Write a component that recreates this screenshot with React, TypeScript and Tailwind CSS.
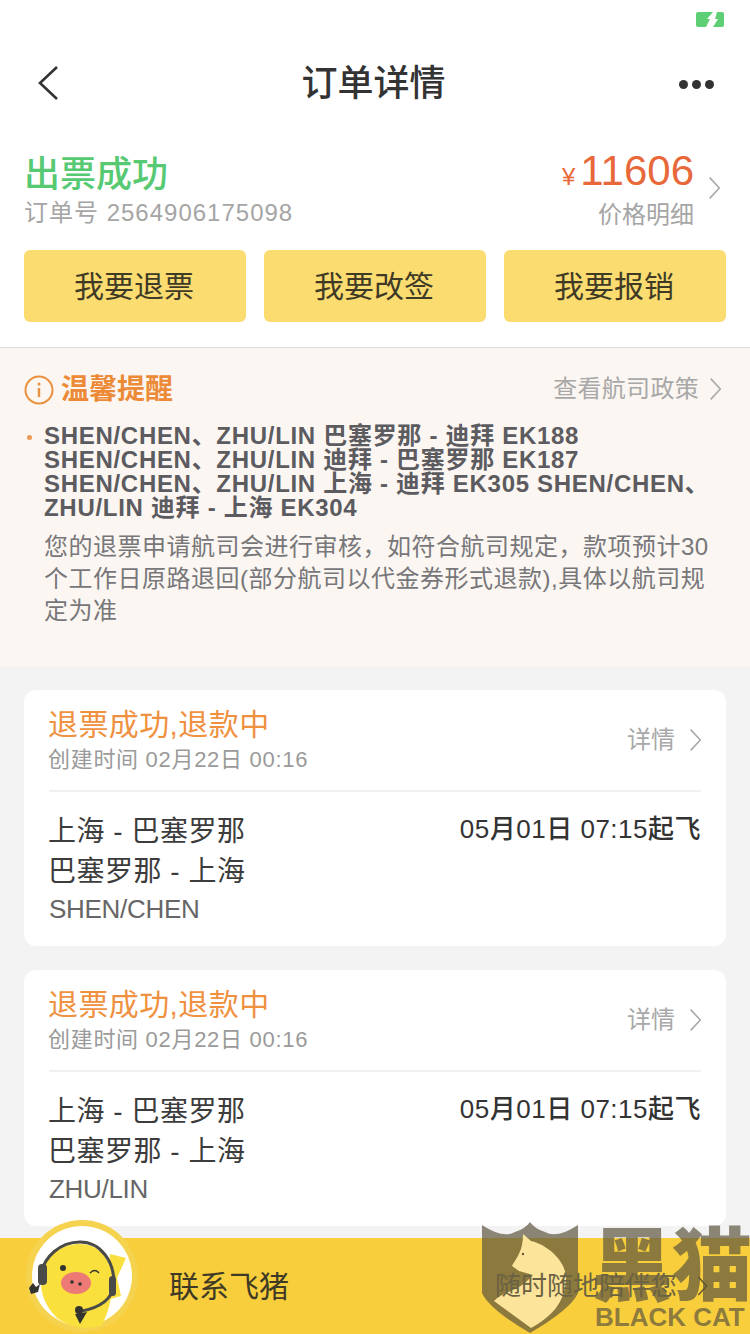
const Chevron = ({ className }: { className: string }) => (
  <svg viewBox="0 0 16 30" className={className} fill="none" stroke="currentColor" strokeWidth="2">
    <path d="M2 2 L14 15 L2 28" />
  </svg>
);

const Buttons = ['我要退票', '我要改签', '我要报销'];

const RefundCard = ({ name }: { name: string }) => (
  <div className="bg-white rounded-xl h-[256px] px-[25px]">
    <div className="h-[102px] flex justify-between items-start border-b-2 border-[#f0f0f0]">
      <div>
        <div className="text-[30px] leading-[38px] mt-[16px] ml-[-1px] tracking-[0.4px] text-[#f0913f]">退票成功,退款中</div>
        <div className="text-[22px] leading-[30px] mt-[1px] ml-[-1px] tracking-[0.7px] text-[#9a9a9a]">创建时间 02月22日 00:16</div>
      </div>
      <div className="flex items-center gap-[14px] mt-[35px] text-[24px] leading-[30px] text-[#a8a8a8]">
        详情
        <Chevron className="w-[13px] h-[24px] mr-[-1px] text-[#aaaaaa]" />
      </div>
    </div>
    <div className="flex justify-between items-start pt-[20px]">
      <div className="text-[28px] leading-[40px] ml-[-1px] tracking-[0.5px] text-[#3c3c3c]">
        <div>上海 - 巴塞罗那</div>
        <div>巴塞罗那 - 上海</div>
        <div className="text-[#666666] text-[26px] tracking-[-0.3px] ml-[1px] mt-[-3px]">{name}</div>
      </div>
      <div className="text-[26px] leading-[38px] mt-[-2px] tracking-[0.5px] font-medium text-[#333333]">05月01日 07:15起飞</div>
    </div>
  </div>
);

export default function App() {
  return (
    <div className="relative w-[750px] h-[1334px] overflow-hidden bg-white font-['Liberation_Sans','Noto_Sans_CJK_SC',sans-serif]">
      {/* Status bar */}
      <div className="h-[40px] flex justify-end pr-[26px] pt-[12px]">
        <svg viewBox="0 0 28 15" className="w-[28px] h-[15px]">
          <path d="M2 0 H17 L11 7 H14 L10 15 H2 Q0 15 0 13 V2 Q0 0 2 0 Z" fill="#5fcf76" />
          <path d="M21 0 H26 Q28 0 28 2 V13 Q28 15 26 15 H17 L22 7 H19 Z" fill="#5fcf76" />
        </svg>
      </div>

      {/* Nav */}
      <div className="h-[86px] grid grid-cols-[1fr_auto_1fr] items-center pl-[38px] pr-[36px]">
        <svg viewBox="0 0 20 34" className="w-[20px] h-[34px] text-[#333333]" fill="none" stroke="currentColor" strokeWidth="2.6">
          <path d="M19 1 L2 17 L19 33" />
        </svg>
        <div className="text-[36px] ml-[-3px] mr-[2px] mt-[2px] font-medium text-[#333333]">订单详情</div>
        <div className="flex justify-end gap-[4px] mt-[2px]">
          <span className="w-[9px] h-[9px] rounded-full bg-[#333333]" />
          <span className="w-[9px] h-[9px] rounded-full bg-[#333333]" />
          <span className="w-[9px] h-[9px] rounded-full bg-[#333333]" />
        </div>
      </div>

      {/* Order summary */}
      <div className="h-[124px] flex justify-between items-start pl-[24px] pr-[29px]">
        <div>
          <div className="text-[36px] leading-[46px] mt-[26px] font-medium text-[#57c973]">出票成功</div>
          <div className="text-[24px] leading-[32px] mt-[-1px] tracking-[1px] text-[#a5a5a5]">订单号 2564906175098</div>
        </div>
        <div className="flex items-start">
          <div className="flex flex-col items-end mt-[20px]">
            <div className="flex items-baseline leading-[50px] text-[#e8683a]">
              <span className="text-[24px] mr-[5px]">¥</span>
              <span className="text-[42px]">11606</span>
            </div>
            <div className="text-[24px] leading-[30px] mt-[-2px] text-[#a5a5a5]">价格明细</div>
          </div>
          <Chevron className="w-[13px] h-[24px] ml-[14px] mt-[50px] text-[#a8a8a8]" />
        </div>
      </div>

      {/* Actions */}
      <div className="flex gap-[18px] px-[24px]">
        {Buttons.map((b) => (
          <div key={b} className="flex-1 h-[72px] rounded-md bg-[#fbdc70] flex items-center justify-center pr-[2px] text-[30px] text-[#3f3a26]">
            {b}
          </div>
        ))}
      </div>

      {/* Notice */}
      <div className="mt-[25px] h-[320px] border-t border-[#dcdcdc] bg-[#fbf6f1] px-[24px]">
        <div className="flex justify-between items-center pt-[21px] h-[62px]">
          <div className="flex items-center gap-[7px]">
            <svg viewBox="0 0 30 30" className="w-[30px] h-[30px]" fill="none">
              <circle cx="15" cy="15" r="13.5" stroke="#e8913f" strokeWidth="2" />
              <circle cx="15" cy="9" r="1.5" fill="#e8913f" />
              <path d="M15 13 V22" stroke="#e8913f" strokeWidth="2.4" />
            </svg>
            <span className="text-[28px] leading-[36px] font-bold text-[#ec8a37]">温馨提醒</span>
          </div>
          <div className="flex items-center gap-[10px] text-[24px] mt-[-2px] tracking-[0.3px] text-[#a8a8a8]">
            查看航司政策
            <Chevron className="w-[13px] h-[24px] mr-[4px] text-[#aaaaaa]" />
          </div>
        </div>
        <div className="relative pl-[20px] mt-[14px]">
          <span className="absolute left-[3px] top-[11px] w-[5px] h-[5px] rounded-full bg-[#ec9a55]" />
          <div className="text-[24px] leading-[24px] tracking-[0.7px] font-bold text-[#5b5b60]">
            <div>SHEN/CHEN、ZHU/LIN 巴塞罗那 - 迪拜 EK188</div>
            <div>SHEN/CHEN、ZHU/LIN 迪拜 - 巴塞罗那 EK187</div>
            <div>SHEN/CHEN、ZHU/LIN 上海 - 迪拜 EK305 SHEN/CHEN、</div>
            <div>ZHU/LIN 迪拜 - 上海 EK304</div>
          </div>
          <div className="mt-[11px] text-[24px] leading-[32px] tracking-[0.5px] text-[#77777a]">
            您的退票申请航司会进行审核，如符合航司规定，款项预计30个工作日原路退回(部分航司以代金券形式退款),具体以航司规定为准
          </div>
        </div>
      </div>

      {/* Refund list */}
      <div className="bg-[#f3f3f3] h-[668px] px-[24px] pt-[23px] flex flex-col gap-[24px]">
        <RefundCard name="SHEN/CHEN" />
        <RefundCard name="ZHU/LIN" />
      </div>

      {/* Bottom bar */}
      <div className="absolute left-0 right-0 bottom-0 h-[96px] bg-[#f8ce3c]" />

      {/* Mascot */}
      <svg viewBox="0 0 114 114" className="absolute left-[25px] top-[1220px] w-[114px] h-[114px]">
        <circle cx="57" cy="56" r="56" fill="#f5d34e" />
        <circle cx="57" cy="56" r="50" fill="#ffffff" />
        <path d="M85 34 L101 38 L92 58 L96 76 L82 80 Z" fill="#f9e03d" />
        <path d="M16 62 C16 38 34 24 55 24 C76 24 87 42 87 62 C87 78 84 92 76 106 Q50 112 32 98 C20 86 16 74 16 62 Z" fill="#f9e03d" />
        <path d="M15 58 C18 36 36 22 55 22 C76 22 90 42 89 66 C86 82 72 88 57 91" fill="none" stroke="#4a4a48" strokeWidth="3" />
        <rect x="13" y="44" width="9" height="21" rx="4" fill="#4a4a48" />
        <rect x="84" y="56" width="7" height="20" rx="3.5" fill="#4a4a48" />
        <path d="M4 68 L8 63 L11 67 L15 64 L13 72 L6 74 Z" fill="#33332f" />
        <circle cx="54" cy="90" r="4" fill="#33332f" />
        <path d="M50 94 L62 92 L55 104 Z" fill="#33332f" />
        <circle cx="38" cy="48" r="3" fill="#33332f" />
        <path d="M65 53 Q70 48 74 53" fill="none" stroke="#33332f" strokeWidth="1.4" />
        <ellipse cx="51" cy="63" rx="15" ry="11" fill="#ee7a76" />
        <circle cx="47" cy="62" r="1.8" fill="#33332f" />
        <circle cx="55" cy="64" r="1.8" fill="#33332f" />
      </svg>

      {/* Watermark */}
      <div className="absolute left-[481px] top-[1221px] w-[269px] h-[113px] flex gap-[16px] pointer-events-none">
        <svg viewBox="0 0 98 113" className="w-[98px] h-[113px] shrink-0">
          <path d="M1 4 Q22 18 34 11 Q44 8 49 1 Q54 8 64 11 Q76 18 97 4 V72 Q90 88 49 112 Q8 88 1 72 Z" fill="#5d563f" fillOpacity="0.7" />
          <path d="M42 13 L50 20 C68 24 86 42 85 58 C84 82 70 96 50 107 L13 80 C20 72 34 70 44 62 L52 54 L38 50 L31 45 C36 36 42 30 42 13 Z" fill="#fde49b" />
          <circle cx="42" cy="33" r="1.2" fill="#6b5b3e" />
        </svg>
        <div className="flex flex-col items-start text-[#5d563f]/70 whitespace-nowrap">
          <div className="text-[80px] leading-[82px] mt-[5px] ml-[-3px] font-black">黑猫</div>
          <div className="text-[26px] leading-[26px] mt-[-4px] font-bold">BLACK CAT</div>
        </div>
      </div>

      {/* Bottom bar texts, the watermark lies under them */}
      <div className="absolute left-0 right-0 bottom-0 h-[96px] flex items-center justify-between pl-[169px] pr-[42px]">
        <div className="text-[30px] text-[#3f3a26]">联系飞猪</div>
        <div className="flex items-center gap-[20px] text-[26px] text-[#6b6243]">
          随时随地陪伴您
          <Chevron className="w-[11px] h-[22px] text-[#5c5430]" />
        </div>
      </div>
    </div>
  );
}
